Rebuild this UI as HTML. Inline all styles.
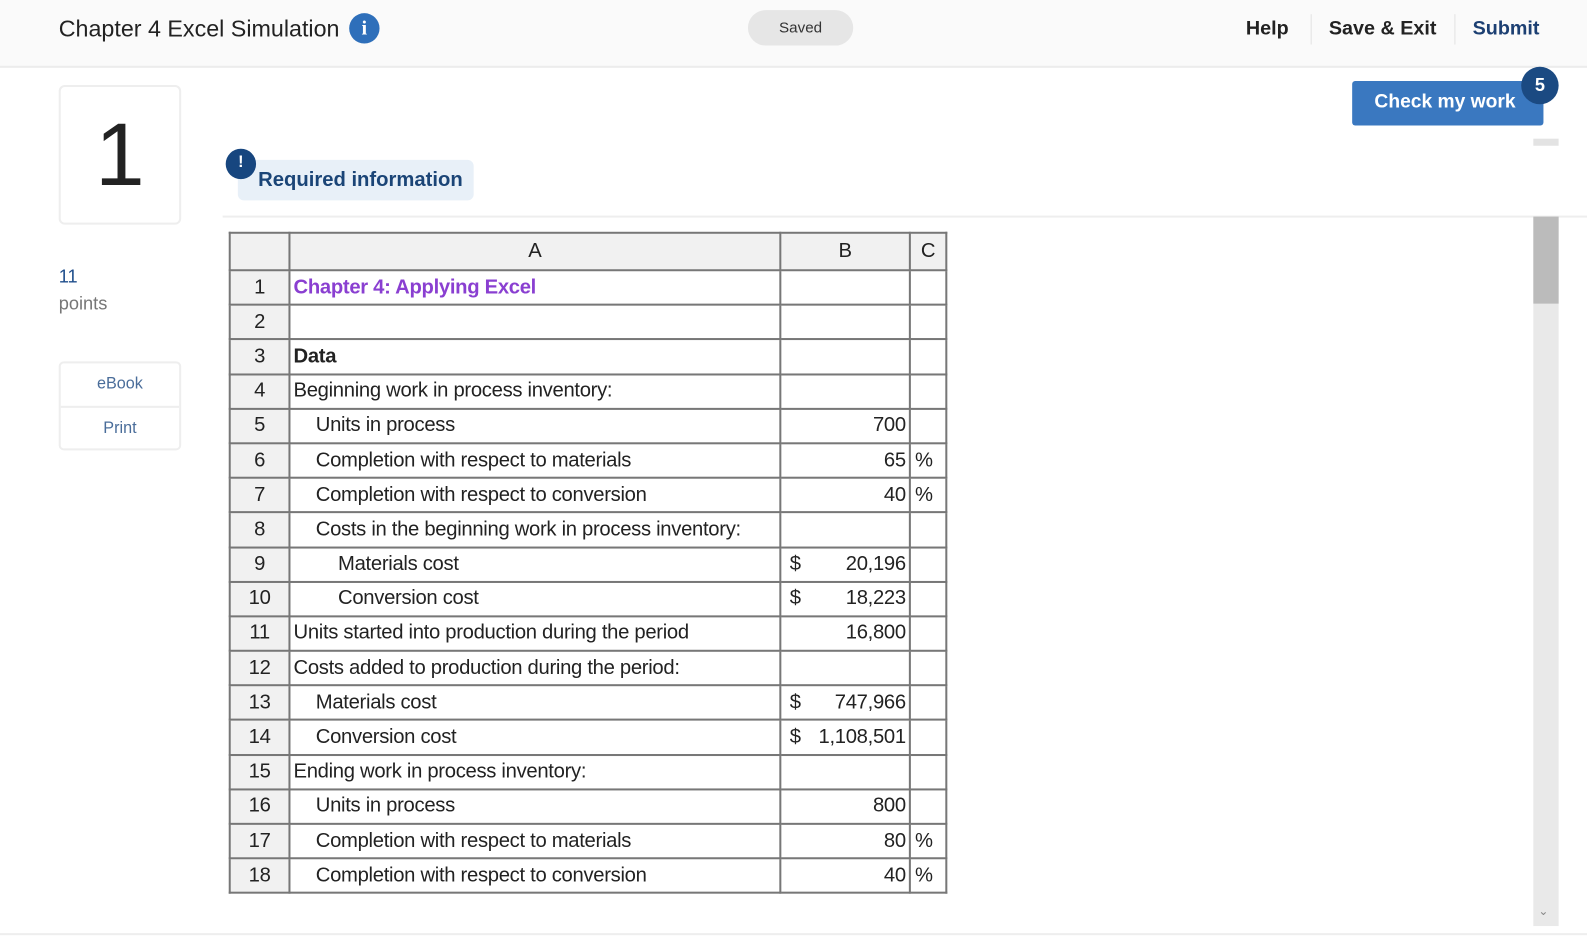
<!DOCTYPE html>
<html><head><meta charset="utf-8"><style>
*{margin:0;padding:0;box-sizing:border-box}
body{width:1587px;height:947px;background:#fff;font-family:"Liberation Sans",Arial,sans-serif;position:relative;overflow:hidden}
#w{position:absolute;left:0;top:0;width:1568px;height:936px;transform:scale(1.0121);transform-origin:0 0}
.hdr{position:absolute;left:0;top:0;width:1568px;height:67px;background:#fafafa;border-bottom:2px solid #ececec}
.title{position:absolute;left:58px;top:15px;font-size:23px;color:#222}
.info{position:absolute;left:345px;top:13px;width:30px;height:30px;border-radius:50%;background:#2e6fba;color:#fff;font:bold 20px "Liberation Serif",serif;text-align:center;line-height:30px}
.saved{position:absolute;left:739px;top:10px;width:104px;height:35px;border-radius:18px;background:#e6e6e6;color:#333;font-size:15px;text-align:center;line-height:35px}
.nav{position:absolute;top:17px;font-size:19.5px;font-weight:bold;color:#222}
.sep{position:absolute;top:14px;width:1px;height:30px;background:#e3e3e3}
.qbox{position:absolute;left:58px;top:84px;width:121px;height:138px;border:2px solid #eee;border-radius:6px;text-align:center;font-size:88px;line-height:134px;color:#222}
.pts{position:absolute;left:58px;top:263px;font-size:18px;color:#1f4e8c}
.pts2{position:absolute;left:58px;top:290px;font-size:18px;color:#777}
.side{position:absolute;left:58px;top:357px;width:121px;height:88px;border:2px solid #eee;border-radius:5px}
.side div{height:44px;line-height:42px;text-align:center;color:#4a6d9a;font-size:16px}
.side div:first-child{border-bottom:2px solid #eee}
.check{position:absolute;left:1336px;top:80px;width:189px;height:44px;background:#3a78c0;border-radius:3px;color:#fff;font-size:19px;font-weight:bold;line-height:42px;padding-left:22px}
.badge{position:absolute;left:1503px;top:66px;width:37px;height:37px;border-radius:50%;background:#1b4a82;color:#fff;font-weight:bold;font-size:18px;text-align:center;line-height:36px}
.req{position:absolute;left:235px;top:158px;width:233px;height:40px;background:#e8f0f8;border-radius:6px;color:#1b4577;font-size:20px;font-weight:bold;line-height:40px;padding-left:20px}
.excl{position:absolute;left:223px;top:147px;width:30px;height:30px;border-radius:50%;background:#17467f;color:#fff;font-weight:bold;font-size:16px;text-align:center;line-height:28px}
.hline{position:absolute;left:220px;top:213px;width:1367px;height:2px;background:#eee}
.sb{position:absolute;left:1515px;top:214px;width:25px;height:701px;background:#e9e9e9}
.thumb{position:absolute;left:1515px;top:214px;width:25px;height:86px;background:#bbb}
.sbtop{position:absolute;left:1515px;top:137px;width:25px;height:7px;background:#e3e3e3}
.bot{position:absolute;left:0;top:922px;width:1587px;height:2px;background:#eee}
table{position:absolute;left:226px;top:229px;border-collapse:collapse;font-size:20px;color:#222;letter-spacing:-0.3px;table-layout:fixed}
td{border:2px solid #777;height:34.2px;padding:0 3px;white-space:nowrap;overflow:hidden}
td.r{background:#f1f1f1;text-align:center;width:59px}
tr.h td{background:#f1f1f1;text-align:center;height:37px}
td.b{text-align:right;width:128px}
td.c{width:36px;padding-left:4px}
.i1{padding-left:25px}.i2{padding-left:47px}
.d{float:left}
</style></head><body><div id="w">
<div class="hdr"></div>
<div class="title">Chapter 4 Excel Simulation</div>
<div class="info">i</div>
<div class="saved">Saved</div>
<div class="nav" style="left:1231px">Help</div>
<div class="sep" style="left:1295px"></div>
<div class="nav" style="left:1313px">Save &amp; Exit</div>
<div class="sep" style="left:1437px"></div>
<div class="nav" style="left:1455px;color:#1c3f72">Submit</div>
<div class="qbox">1</div>
<div class="pts">11</div><div class="pts2">points</div>
<div class="side"><div>eBook</div><div>Print</div></div>
<div class="check">Check my work</div>
<div class="badge">5</div>
<div class="sbtop"></div>
<div class="req">Required information</div>
<div class="excl">!</div>
<div class="hline"></div>
<div class="sb"></div><div class="thumb"></div>
<div style="position:absolute;left:1520px;top:893px;color:#888;font-size:12px">&#8964;</div>
<div class="bot"></div>
<table>
<tr class="h"><td class="r"></td><td style="width:485px">A</td><td class="b" style="text-align:center">B</td><td class="c" style="text-align:center;padding:0">C</td></tr>
<tr><td class="r">1</td><td style="color:#8a3fd1;font-weight:bold">Chapter 4: Applying Excel</td><td class="b"></td><td class="c"></td></tr>
<tr><td class="r">2</td><td></td><td class="b"></td><td class="c"></td></tr>
<tr><td class="r">3</td><td style="font-weight:bold">Data</td><td class="b"></td><td class="c"></td></tr>
<tr><td class="r">4</td><td>Beginning work in process inventory:</td><td class="b"></td><td class="c"></td></tr>
<tr><td class="r">5</td><td class="i1">Units in process</td><td class="b">700</td><td class="c"></td></tr>
<tr><td class="r">6</td><td class="i1">Completion with respect to materials</td><td class="b">65</td><td class="c">%</td></tr>
<tr><td class="r">7</td><td class="i1">Completion with respect to conversion</td><td class="b">40</td><td class="c">%</td></tr>
<tr><td class="r">8</td><td class="i1">Costs in the beginning work in process inventory:</td><td class="b"></td><td class="c"></td></tr>
<tr><td class="r">9</td><td class="i2">Materials cost</td><td class="b"><span class="d">&nbsp;$</span>20,196</td><td class="c"></td></tr>
<tr><td class="r">10</td><td class="i2">Conversion cost</td><td class="b"><span class="d">&nbsp;$</span>18,223</td><td class="c"></td></tr>
<tr><td class="r">11</td><td>Units started into production during the period</td><td class="b">16,800</td><td class="c"></td></tr>
<tr><td class="r">12</td><td>Costs added to production during the period:</td><td class="b"></td><td class="c"></td></tr>
<tr><td class="r">13</td><td class="i1">Materials cost</td><td class="b"><span class="d">&nbsp;$</span>747,966</td><td class="c"></td></tr>
<tr><td class="r">14</td><td class="i1">Conversion cost</td><td class="b"><span class="d">&nbsp;$</span>1,108,501</td><td class="c"></td></tr>
<tr><td class="r">15</td><td>Ending work in process inventory:</td><td class="b"></td><td class="c"></td></tr>
<tr><td class="r">16</td><td class="i1">Units in process</td><td class="b">800</td><td class="c"></td></tr>
<tr><td class="r">17</td><td class="i1">Completion with respect to materials</td><td class="b">80</td><td class="c">%</td></tr>
<tr><td class="r">18</td><td class="i1">Completion with respect to conversion</td><td class="b">40</td><td class="c">%</td></tr>
</table>
</div></body></html>
